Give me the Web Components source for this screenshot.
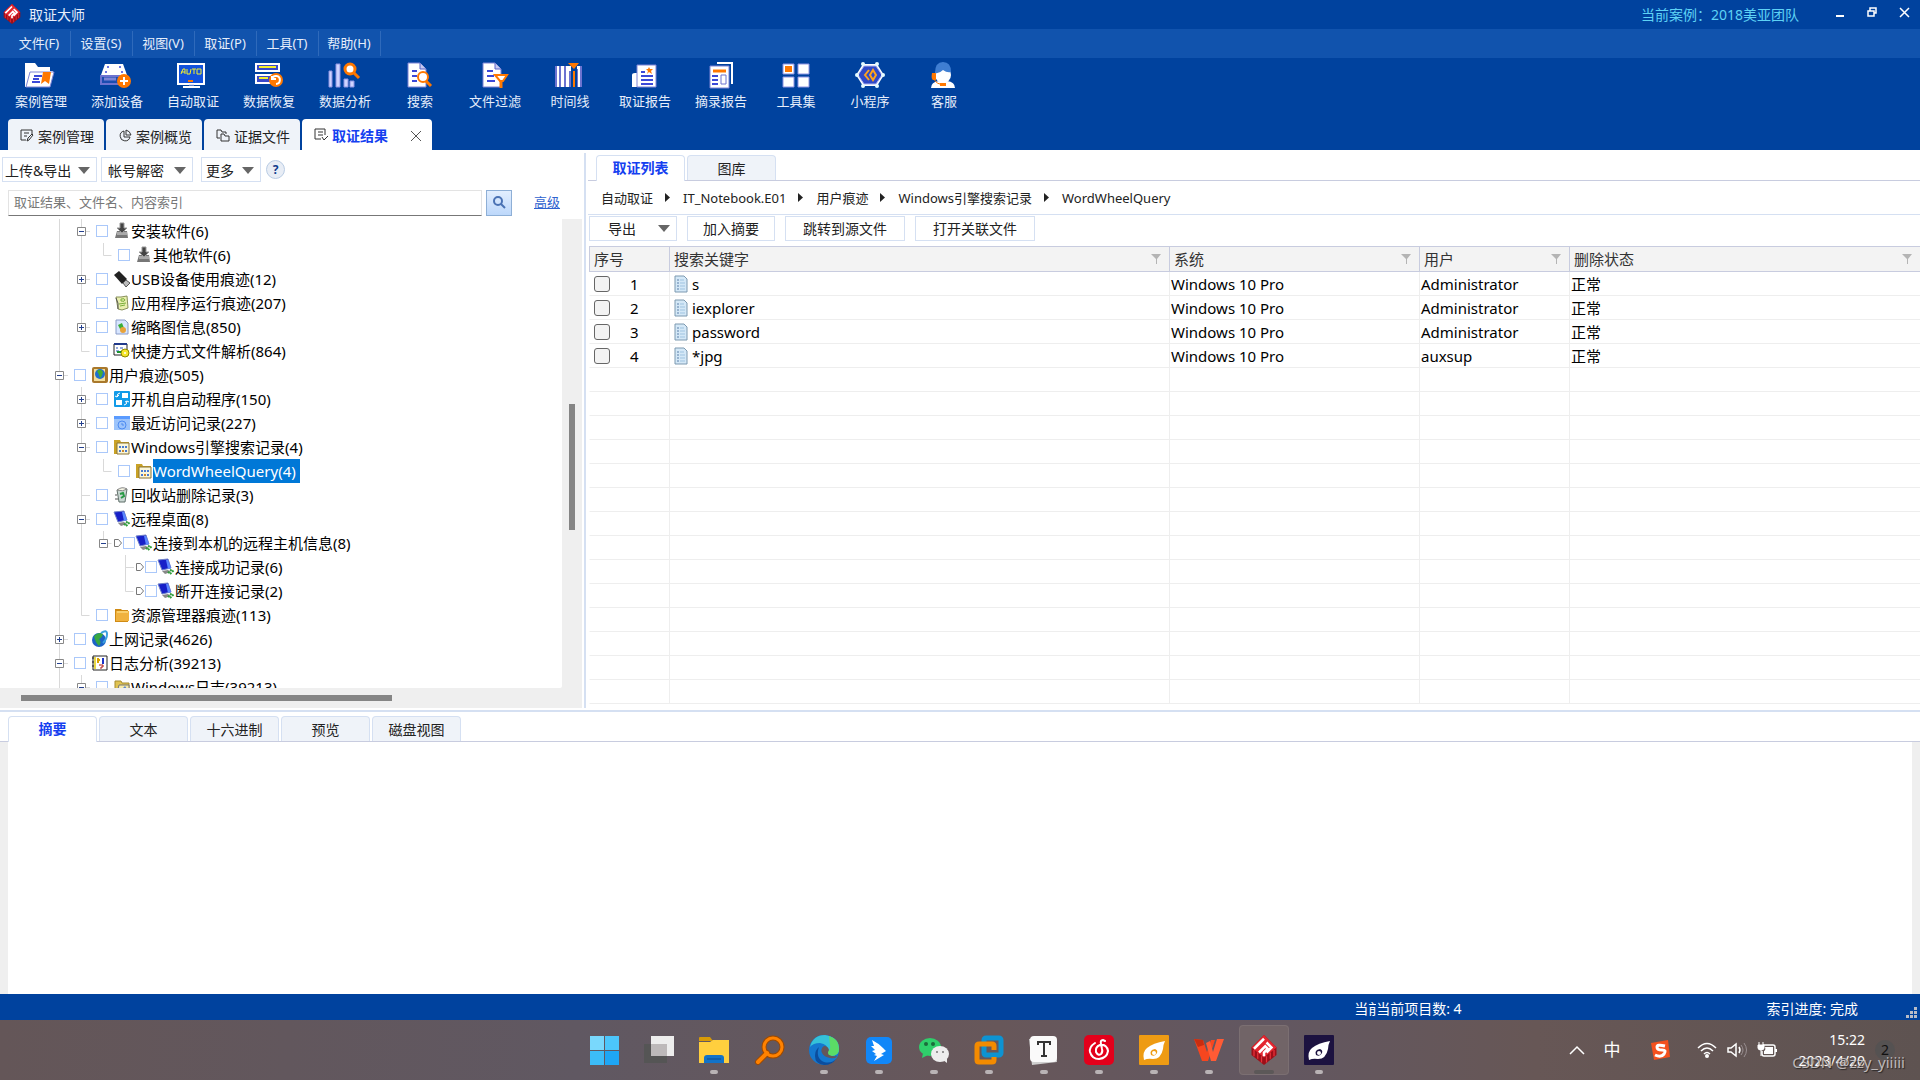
<!DOCTYPE html>
<html lang="zh-CN">
<head>
<meta charset="utf-8">
<title>取证大师</title>
<style>
  html, body {
    margin: 0;
    height: 100%;
    overflow: hidden;
  }

  body {
    --navy: #00429e;
    --line: #d5e0f2;
    --strong-line: #c8ccdf;
    --tab: #eff3f9;
    --accent: #1540f0;
    --gray: #efefef;
    font-family: "Noto Sans", "Noto Sans CJK SC", sans-serif;
    font-size: 14px;
    color: #222;
  }
</style>
</head>
<body>
<app-window></app-window>

<script>
const svg = (w, h, body) =>
  `<svg width="${w}" height="${h}" viewBox="0 0 ${w} ${h}" fill="none" aria-hidden="true">${body}</svg>`;

// Styles every shadow root starts with
const BASE = `
  *, *::before, *::after { box-sizing: border-box; }
  svg { display: block; flex: none; overflow: visible; }
  button { font: inherit; color: inherit; margin: 0; padding: 0; border: 0; background: none; white-space: nowrap; }
  input { font: inherit; margin: 0; }
`;

class BaseElement extends HTMLElement {
  connectedCallback() {
    this.attachShadow({ mode: "open" });
    this.shadowRoot.innerHTML = `<style>${BASE}${this.styles()}</style>${this.markup()}`;
  }
  styles() { return ""; }
  markup() { return "<slot></slot>"; }
}

/* ---------- icons ---------- */

const LOGO = `
  <path d="M12 0 22 10V16L12 24 2 16V10Z" fill="#9c0f18"/>
  <path d="M12 0 22 10 12 18 2 10Z" fill="#e3262f"/>
  <path d="M4 12v5M7 14v5M10 17v5M14 17v5M17 14v5M20 12v5" stroke="#e8323a"/>
  <path d="m4 11 8-8M8 14l5-5 2 2-3 3v3M14 6l4 4-4 4" stroke="#fff" stroke-width="2"/>`;

const PAGE = `<path d="M4 1h12l6 6v18H4z" fill="#fff" stroke="#7d84d6"/><path d="M16 1v6h6" fill="#c7caf0" stroke="#5a62c8"/>`;

const TOOL_ICONS = {
  case: `<path d="M0 25V1h10l3 4h12v4h3l-4 16z" fill="#fff"/><path d="m1 25 4-15h24l-4 15z" fill="#fff" stroke="#7d84d6"/>
    <path d="M9 14h8M8 17h6M7 20h8" stroke="#3b49d8" stroke-width="2"/><path d="M18 10h8l-2 12-4-3-4 3z" fill="#ff7800"/>`,
  device: `<g transform="translate(-2)"><path d="M6 2h18l4 11H2z" fill="#fff"/><circle cx="9" cy="5" r="1" fill="#3b49d8"/><circle cx="21" cy="5" r="1" fill="#3b49d8"/><circle cx="7" cy="10" r="1" fill="#3b49d8"/><circle cx="23" cy="10" r="1" fill="#3b49d8"/>
    <path d="M2 14h26v8H2z" fill="#1b4db0" stroke="#6c73d0" stroke-width="2"/><path d="M5 17h12" stroke="#7d84d6" stroke-width="3"/>
    <circle cx="25" cy="19" r="7" fill="#ff7800"/><path d="M25 15v8M21 19h8" stroke="#fff" stroke-width="2"/></g>`,
  auto: `<g transform="translate(-2)"><rect x="3" y="2" width="26" height="20" fill="#1252dc" stroke="#fff" stroke-width="2"/>
    <path d="m6 12 2-5h2v5m-4-2h4m2-3v5h3l1-5m1 0h4m-2 0v5m3-5h4v5h-4z" stroke="#f4ef2c"/>
    <rect x="13" y="18" width="5" height="2" fill="#ff7800"/><path d="M14 23h5" stroke="#b7bdf0"/><path d="M8 25h17" stroke="#fff" stroke-width="2"/></g>`,
  restore: `<rect x="3" y="2" width="23" height="7" fill="#3a48c8" stroke="#fff" stroke-width="2"/><path d="M6 5h17" stroke="#f4ef2c" stroke-width="2"/>
    <rect x="3" y="13" width="18" height="8" fill="#3a48c8" stroke="#fff" stroke-width="2"/><path d="M6 16h9" stroke="#f4ef2c" stroke-width="2"/>
    <circle cx="23" cy="18" r="7" fill="#ff7800"/><path d="M19 17a4 4 0 1 1 4 5m-4-8v3h4" stroke="#fff" stroke-width="2"/>`,
  chart: `<g transform="translate(-2)"><path d="M2 9h3v16H2zM9 2h4v23H9zM17 17h4v8h-4zM23 19h4v6h-4z" fill="#cfd4ff" stroke="#8d93e2"/>
    <circle cx="23" cy="7" r="5" stroke="#ff7800" stroke-width="3" fill="#fff"/><path d="m27 11 5 5" stroke="#ff7800" stroke-width="3"/></g>`,
  search: `${PAGE}<path d="M8 9h5M8 14h5M8 19h5" stroke="#3b49d8" stroke-width="2"/>
    <circle cx="19" cy="15" r="5" stroke="#ff7800" stroke-width="2" fill="#fff"/><path d="m22 19 5 5" stroke="#ff7800" stroke-width="3"/>`,
  filter: `${PAGE}<path d="M8 9h6M8 14h7M8 19h8" stroke="#3b49d8" stroke-width="2"/>
    <path d="M16 13h12l-4 6h-3z" fill="#fff" stroke="#ff7800" stroke-width="2"/><path d="M22 18v8" stroke="#ff7800" stroke-width="3"/>`,
  timeline: `<g transform="translate(-2)"><path d="M4 4h26v21H4z" fill="#fff"/>
    <path d="M4 4v21M8 4v21M13 4v21M18 9v16M25 7v18M29 4v21" stroke="#6c73d0" stroke-width="2"/><path d="M19 4h6v21h-6z" fill="#00429e"/><path d="M16 1h11l-5 6zM21 9h2v16h-2z" fill="#ff7800"/></g>`,
  report: `<path d="M3 13q0-2 3-2h3v14H3z" fill="#fff"/><path d="M8 3h19v22H8z" fill="#fff" stroke="#7d84d6"/>
    <path d="M12 10h4M12 14h12M12 18h12M12 22h12" stroke="#3b49d8" stroke-width="2"/><path d="m20 5 1 2h3l-2 2 1 3-3-2-2 2 1-3-2-2h2z" fill="#ff7800"/>`,
  extract: `<path d="M12 1h15v21" stroke="#fff" stroke-width="2"/><path d="M5 4h19v22H5z" fill="#fff" stroke="#7d84d6"/>
    <path d="M8 9h13" stroke="#ff7800" stroke-width="3"/><path d="M7 14h6M7 18h6M7 22h6" stroke="#3b49d8" stroke-width="2"/><path d="M16 13h5v9h-5z" stroke="#6c73d0"/>`,
  tools: `<path d="M3 2h11v10H3zM18 2h11v10H18zM3 15h11v10H3zM18 15h11v10H18z" fill="#fff" stroke="#8d93e2"/><path d="M5 4h7v6H5z" fill="#ff7800"/>`,
  mini: `<path d="m9 2 14 0 7 11-7 11H9L2 13z" fill="#fff"/><path d="m10 4 12 0 6 9-6 9H10L4 13z" fill="#2f49c8" stroke="#aab2ee"/>
    <circle cx="9" cy="2" r="2" fill="#e4fbff"/><circle cx="23" cy="2" r="2" fill="#e4fbff"/><circle cx="9" cy="24" r="2" fill="#e4fbff"/><circle cx="23" cy="24" r="2" fill="#e4fbff"/><circle cx="3" cy="13" r="2" fill="#e4fbff"/><circle cx="29" cy="13" r="2" fill="#e4fbff"/>
    <path d="m15 8-4 5 4 5M19 8l-3 5 3 5 3-5z" stroke="#ffa21a" stroke-width="2"/>`,
  service: `<path d="M3 26q0-6 8-7h8q8 1 8 7z" fill="#fff"/><circle cx="15" cy="13" r="8" fill="#fff"/><path d="M7 11q0-11 8-11t8 10q-4 1-8-2-4 4-8 3z" fill="#3f7ed2"/>
    <path d="M4 11h4v7H5q-2-1-1-7z" fill="#ff7800"/><path d="M6 17q3 6 9 5" stroke="#ff7800"/><path d="M12 21h6v3h-6z" fill="#ff7800"/>`
};

const TREE_ICONS = {
  install: `<path d="M3 8h10l1 7H1z" fill="#777"/><path d="M3 9h10v3H3z" fill="#aaa"/><path d="M6 0h4v5h3l-5 5-5-5h3z" fill="#444" stroke="#999"/>`,
  usb: `<path d="m0 4 5-4 8 8-5 5z" fill="#222"/><path d="m9 12 3-3 4 3-4 4z" fill="#bbb" stroke="#555"/>`,
  program: `<path d="m2 2 5 0 6-1 1 12-6 2-4-1z" fill="#e9efae" stroke="#88905a"/><path d="M7 4q4-1 4 1T7 6zm-2 5 7-1m-6 3 5-1" stroke="#7aae3a"/><path d="M2 3q3 5 2 11" stroke="#555"/>`,
  thumb: `<path d="M2 1h9l3 3v11H2z" fill="#d8e6ff" stroke="#8a9cc8"/><path d="m4 6 4-2 2 5-4 1z" fill="#3cae3a"/><circle cx="9" cy="11" r="3" fill="#e8a33a"/>`,
  shortcut: `<path d="M0 1h13v11H0z" fill="#fff" stroke="#222"/><path d="M0 1h13" stroke="#223a8c" stroke-width="2"/><path d="M2 5h2m-2 3h3m1-3h3" stroke="#2a55b8"/><circle cx="11" cy="10" r="4" fill="#f5e62c" stroke="#8f8600"/><circle cx="11" cy="10" r="1" fill="#fff"/><path d="M3 9h4" stroke="#17942c" stroke-width="2"/>`,
  user: `<rect x="0" y="0" width="16" height="16" rx="2" fill="#a9782b"/><rect x="2" y="2" width="11" height="12" fill="#f3dd9a"/><circle cx="8" cy="7" r="5" fill="#1f6fd0"/><path d="M5 4q4-3 6 1-1 5-3 6-1-4-3-7z" fill="#42ad35"/>`,
  startup: `<rect width="16" height="16" rx="1" fill="#129be8"/><path d="M8 2h6v5H8zM2 9h6v5H2z" fill="#fff"/><path d="M6 2q-3 0-3 4m0 0L1 5m2 1 2-2M10 14q3 0 3-4m0 0-2 1m2-1 2 1" stroke="#fff"/>`,
  recent: `<path d="M0 1h16v14H0z" fill="#9cc4fb"/><path d="M0 1h16v3H0z" fill="#5a9bff"/><circle cx="8" cy="10" r="4" stroke="#4c8bf2"/><path d="M8 8v2h2" stroke="#4c8bf2"/>`,
  engine: `<path d="M0 1h6l1 2h8v12H0z" fill="#c9a227"/><path d="M3 4h12v11H3z" fill="#faf6da" stroke="#8a7434"/><path d="M5 8h2m1 0h2m1 0h2M5 12h2m4 0h2" stroke="#4a7bd0" stroke-width="2"/><path d="M8 12h2" stroke="#d08a2a" stroke-width="2"/>`,
  recycle: `<path d="m3 3 10-1-2 13H5z" fill="#c9d6d2" stroke="#5f6f69"/><path d="M3 3q5-4 10-1-4 3-10 1z" fill="#f8f8e8" stroke="#888"/><path d="m6 7 3-1 1 3-3 2" stroke="#2a9a46" stroke-width="2"/><path d="M1 8h2m-2 4h3" stroke="#555"/>`,
  remote: `<path d="m0 1 10-1 3 9-9 2z" fill="#1720c8" stroke="#6f80c8"/><path d="m8 1 2 0 3 8-3 1z" fill="#5a86ff"/><path d="m4 12 6-1 3 2-6 2z" fill="#888"/><path d="m10 14 4-4m-2 5 4-4" stroke="#2f9d3a" stroke-width="2" stroke-dasharray="2 1"/>`,
  folder: `<path d="M1 2h6l1 1h6v12H1z" fill="#d08b14"/><path d="M2 4h13v10H2z" fill="#f0b23e"/><path d="M3 4h11v2H3z" fill="#f9cf6c"/>`,
  globe: `<circle cx="7" cy="9" r="7" fill="#1b63c6"/><path d="M2 5q5-5 9-2-1 4-4 5 3 3 0 7-4-4-5-10z" fill="#38a842"/><path d="M9 2q6-4 6 1t-4 9" stroke="#3aa0e0" stroke-width="2"/>`,
  log: `<path d="M1 1h14v14H1z" fill="#fff" stroke="#222"/><path d="M3 2v12" stroke="#e8d84a" stroke-width="2"/><path d="M6 3v5m-1-3h3" stroke="#d9a300" stroke-width="2"/><path d="M11 3v6" stroke="#1b32c8" stroke-width="2"/><path d="M7 10h4v2H9v2" stroke="#b01818"/><path d="M0 3h2M0 7h2M0 11h2" stroke="#222"/>`,
  winlog: `<path d="M1 2h6l1 2h7v11H1z" fill="#e0c352" stroke="#a58b2c"/><path d="M5 6h10v8H3z" fill="#f5eaa8" stroke="#777"/><path d="m8 10 3-3 2 3z" fill="#5a86d0"/>`
};

const TAB_ICONS = {
  edit: `<path d="M12 5V1H1v10h5M4 4h5M4 7h3M7 12l1-3 4-4 1 1-4 5z" stroke="#333"/>`,
  pie: `<path d="M6 2a5 5 0 1 0 6 6H6zM8 1q4 1 5 5H8z" stroke="#333"/>`,
  copy: `<path d="M4 9H1V1h4l1 2h4v2M5 5h3l1 2h4v5H5z" stroke="#333"/>`,
  check: `<path d="M11 7V1H1v10h6M4 4h5M4 7h5M8 9l2 3 4-4" stroke="#333"/>`
};

const APP_ICONS = {
  start: `<path d="M1 1h14v14H1z" fill="#79d8fc"/><path d="M16 1h14v14H16z" fill="#4cc6fb"/><path d="M1 16h14v14H1z" fill="#3cbcf8"/><path d="M16 16h14v14H16z" fill="#1ea6f5"/>`,
  taskview: `<path d="M0 9h23v19H0z" fill="#555"/><path d="M7 1h23v20H7z" fill="#ededed"/><path d="M7 9h16v12H7z" fill="#bdb9ba"/>`,
  files: `<path d="M0 3q0-1 1-1h10l3 4H0z" fill="#d79a06"/><path d="M0 7h11l3-2h16v23H0z" fill="#ffcf3e"/><path d="M5 28v-5q0-3 3-3h14q3 0 3 3v5z" fill="#1273c8"/><path d="M8 24h14" stroke="#0b4d8f"/>`,
  everything: `<circle cx="19" cy="12" r="9" stroke="#9e4a00" stroke-width="5"/><path d="M13 18 4 27" stroke="#9e4a00" stroke-width="6" stroke-linecap="round"/><circle cx="19" cy="12" r="9" stroke="#ff8200" stroke-width="3"/><path d="M13 18 4 27" stroke="#ff8200" stroke-width="4" stroke-linecap="round"/>`,
  edge: `<circle cx="15" cy="15" r="15" fill="#1478cf"/><path d="M1 12Q4 0 16 0q14 2 14 14 0 7-8 7-5-1-3-5 0-7-8-8-7 0-10 4z" fill="#35c1d8"/><path d="M20 1q10 3 10 13 0 7-8 7-5-1-3-5 3-1 2-6z" fill="#5bdc66"/><path d="M10 12q-4 11 5 15 7 2 12-3-4 6-12 6-9-1-9-9 0-6 4-9z" fill="#0c4d9d"/><path d="M15 11q-4 3-2 7t8 5q6 1 7-2-4 1-8-1-2-2 0-5-1-4-5-4z" fill="#65565a"/>`,
  dingtalk: `<rect x="2" y="2" width="26" height="27" rx="5" fill="#1187f8"/><path d="M8 5q6 3 11 8l3 3-5 3 3 1-10 6 3-5-3-1 2-1-4-3 3-1-4-4 3 0z" fill="#fff"/>`,
  wechat: `<ellipse cx="11" cy="12" rx="11" ry="9" fill="#2fcf6b"/><path d="m4 18-1 5 6-3z" fill="#2fcf6b"/><circle cx="7" cy="9" r="2" fill="#1b6c3c"/><circle cx="14" cy="9" r="2" fill="#1b6c3c"/><ellipse cx="21" cy="19" rx="9" ry="8" fill="#ededed"/><path d="m24 25 4 3v-5z" fill="#ededed"/><circle cx="18" cy="17" r="1" fill="#777"/><circle cx="24" cy="17" r="1" fill="#777"/>`,
  vmware: `<rect x="10" y="3" width="17" height="17" rx="2" stroke="#0d93d2" stroke-width="5"/><path d="M20 22v3q0 2-2 2H5q-2 0-2-2V11q0-2 2-2h13q2 0 2 2v4" stroke="#f38b00" stroke-width="5"/><path d="M10 12v6q0 2 2 2h5" stroke="#0d93d2" stroke-width="4"/>`,
  typora: `<path d="M0 4 24 1l4 26-25 3z" fill="#cfcfcf"/><rect x="1" y="1" width="27" height="26" rx="4" fill="#fafafa"/><path d="M9 10V7h12v3M15 7v14M12 21h6" stroke="#333" stroke-width="2"/>`,
  netease: `<rect width="30" height="30" rx="5" fill="#e3001b"/><path d="M11 8q-6 4-5 9 2 7 9 7 8-1 9-8-1-7-8-6-5 2-4 7 2 4 5 2 2-2 1-5L17 9q-1-4 2-4l2 1" stroke="#fff" stroke-width="2" stroke-linecap="round"/>`,
  feather: `<path d="M5 25q-2-8 3-12 6-5 18-7-2 4-2 8-2 10-10 10-5-1-9 1zM12 20q4 2 6-2 1-3-2-4-6 1-4 6z" fill="#fff" fill-rule="evenodd"/><circle cx="15" cy="18" r="2" fill="#fff"/>`,
  wps: `<path d="m0 4 9 1 4 12 4-12h4l-7 21H8z" fill="#f6461f"/><path d="m12 8 4-2 3 11 4-13h7l-8 22h-5z" fill="#ff5b35"/><path d="m0 4 9 1 1 5-6 2z" fill="#c92d0f"/>`
};

const appIcon = (name) => {
  if (name === "forensic") return `<svg width="30" height="30" viewBox="0 0 24 24" fill="none" aria-hidden="true">${LOGO}</svg>`;
  if (name === "orange") return svg(30, 30, `<rect width="30" height="30" rx="1" fill="#ee9b13"/>${APP_ICONS.feather}`);
  if (name === "purple") return svg(30, 30, `<rect width="30" height="30" rx="1" fill="#1c1240"/>${APP_ICONS.feather}`);
  return svg(30, 30, APP_ICONS[name]);
};

const CARET = svg(12, 8, `<path d="M0 1h12L6 8z" fill="#666"/>`);

/* ---------- header ---------- */

class TitleBar extends BaseElement {
  styles() {
    return `
      :host { display: flex; align-items: center; height: 29px; padding: 0 6px 2px 3px; box-sizing: border-box; background: var(--navy); color: #e6eefb; }
      .name { margin-left: 8px; flex: 1; }
      .case { color: #5ed2f5; margin-right: 31px; }
      .controls { display: flex; gap: 12px; margin-bottom: 4px; }
      .controls button { width: 20px; height: 20px; display: grid; place-items: center; }
    `;
  }
  markup() {
    return `
      <svg width="18" height="20" viewBox="2 0 20 24" fill="none" aria-hidden="true">${LOGO}</svg>
      <span class="name">取证大师</span>
      <span class="case">当前案例：2018美亚团队</span>
      <div class="controls">
        <button aria-label="最小化">${svg(10, 12, `<path d="M1 10h8" stroke="#fff" stroke-width="2"/>`)}</button>
        <button aria-label="还原">${svg(10, 12, `<path d="M3 5V2h6v5H7M1 5h6v5H1z" stroke="#fff" stroke-width="1.500"/>`)}</button>
        <button aria-label="关闭">${svg(12, 12, `<path d="m2 2 9 9M11 2l-9 9" stroke="#fff" stroke-width="1.500"/>`)}</button>
      </div>`;
  }
}

class MenuBar extends BaseElement {
  styles() {
    return `
      :host { display: flex; align-items: center; height: 29px; padding-left: 9px; background: #1153ad; color: #e6eefb; font-size: 13px; }
      button { width: 62px; height: 25px; padding: 0 1px 2px 0; border-right: 1px solid #2f6abb; }
    `;
  }
  markup() {
    return ["文件(F)", "设置(S)", "视图(V)", "取证(P)", "工具(T)", "帮助(H)"].map((t) => `<button>${t}</button>`).join("");
  }
}

class ToolItem extends BaseElement {
  styles() {
    return `
      :host { display: block; width: 74px; color: #e6eefb; font-size: 13px; }
      :host([wide]) { width: 76px; }
      button { width: 100%; display: flex; flex-direction: column; align-items: center; gap: 1px; }
      span { line-height: 20px; }
    `;
  }
  markup() {
    return `<button>${svg(32, 28, TOOL_ICONS[this.getAttribute("icon")])}<span><slot></slot></span></button>`;
  }
}

class ToolBar extends BaseElement {
  styles() {
    return `:host { display: flex; box-sizing: border-box; height: 61px; padding: 4px 3px 0; background: var(--navy); }`;
  }
  markup() {
    const tools = [["case", "案例管理"], ["device", "添加设备"], ["auto", "自动取证"], ["restore", "数据恢复"], ["chart", "数据分析"],
      ["search", "搜索"], ["filter", "文件过滤"], ["timeline", "时间线"], ["report", "取证报告"], ["extract", "摘录报告"],
      ["tools", "工具集"], ["mini", "小程序"], ["service", "客服"]];
    return tools.map(([icon, label]) => `<tool-item icon="${icon}" ${label.length === 4 ? "wide" : ""}>${label}</tool-item>`).join("");
  }
}

class MainTabs extends BaseElement {
  styles() {
    return `
      :host { display: flex; gap: 2px; height: 31px; padding-left: 8px; background: var(--navy); }
      .tab { display: flex; align-items: center; width: 96px; padding: 2px 0 0 12px; background: var(--tab); border-radius: 4px 4px 0 0; }
      .active { width: 130px; padding: 0 10px 0 12px; background: #fff; color: var(--accent); font-weight: 700; }
      .close { margin-left: auto; }
      .tab > button:first-child { display: flex; align-items: center; gap: 4px; }
    `;
  }
  markup() {
    const tab = (icon, label) => `<div class="tab"><button>${svg(14, 14, TAB_ICONS[icon])}${label}</button></div>`;
    return `
      ${tab("edit", "案例管理")}${tab("pie", "案例概览")}${tab("copy", "证据文件")}
      <div class="tab active">
        <button>${svg(14, 14, TAB_ICONS.check)}取证结果</button>
        <button class="close" aria-label="关闭标签">${svg(12, 12, `<path d="m1 2 10 10M11 2 1 12" stroke="#555"/>`)}</button>
      </div>`;
  }
}

/* ---------- evidence tree ---------- */

class TreeRow extends BaseElement {
  styles() {
    return `
      :host { display: flex; align-items: center; height: 24px; padding-left: 48px; font-size: 15px; color: #000; white-space: nowrap; }
      input { appearance: none; width: 12px; height: 12px; margin: 0 6px 0 4px; border: 1px solid #aac8fa; background: #fff; flex: none; }
      .mark { margin-right: 1px; }
      .mark + input { margin: 0 1px 0 0; }
      label { display: flex; align-items: center; gap: 1px; }
      span { line-height: 24px; }
      :host([selected]) span { background: #0078d7; color: #fff; padding-right: 4px; }
    `;
  }
  // One character per level: "|" passes through, " " is empty, "t" and "l" are
  // a tee and a corner, "+" and "-" are boxes on a tee, "=" is a box on a corner
  cell(c) {
    const line = `stroke="#d9d9d9"`;
    let out = "";
    if (c === "|") out = `<path d="M11.500 0v24" ${line}/>`;
    if (c === "t" || c === "+" || c === "-") out = `<path d="M11.500 0v24M12 12.500h8" ${line}/>`;
    if (c === "l" || c === "=") out = `<path d="M11.500 0v12.500h8" ${line}/>`;
    if ("+-=".includes(c)) {
      out += `<path d="M7.500 8.500h8v8h-8z" fill="#fff" stroke="#888"/><path d="M9 12.500h5${c === "+" ? "M11.500 10v5" : ""}" stroke="#24408e"/>`;
    }
    return svg(22, 24, out);
  }
  markup() {
    const mark = this.hasAttribute("marked")
      ? `<svg class="mark" width="8" height="8" viewBox="0 0 8 8" fill="none"><path d="M.500.500h4l3 3.500-3 3.500h-4z" stroke="#777"/></svg>` : "";
    return `${[...this.getAttribute("guides")].map((c) => this.cell(c)).join("")}${mark}<input type="checkbox" id="pick">
      <label for="pick">${svg(16, 16, TREE_ICONS[this.getAttribute("icon")])}<span><slot></slot></span></label>`;
  }
}

const TREE = [
  ["|-", "install", "安装软件(6)"],
  ["||l", "install", "其他软件(6)"],
  ["|+", "usb", "USB设备使用痕迹(12)"],
  ["|t", "program", "应用程序运行痕迹(207)"],
  ["|+", "thumb", "缩略图信息(850)"],
  ["|l", "shortcut", "快捷方式文件解析(864)"],
  ["-", "user", "用户痕迹(505)"],
  ["|+", "startup", "开机自启动程序(150)"],
  ["|+", "recent", "最近访问记录(227)"],
  ["|-", "engine", "Windows引擎搜索记录(4)"],
  ["||l", "engine", "WordWheelQuery(4)", "selected"],
  ["|t", "recycle", "回收站删除记录(3)"],
  ["|-", "remote", "远程桌面(8)"],
  ["||=", "remote", "连接到本机的远程主机信息(8)", "marked"],
  ["|| t", "remote", "连接成功记录(6)", "marked"],
  ["|| l", "remote", "断开连接记录(2)", "marked"],
  ["|l", "folder", "资源管理器痕迹(113)"],
  ["+", "globe", "上网记录(4626)"],
  ["-", "log", "日志分析(39213)"],
  ["|-", "winlog", "Windows日志(39213)"]
];

class EvidencePanel extends BaseElement {
  styles() {
    return `
      :host { display: flex; flex-direction: column; width: 584px; min-height: 0; background: #fff; }
      .actions { display: flex; align-items: center; padding: 7px 2px 0; height: 32px; }
      .actions button { display: flex; align-items: center; justify-content: space-between; height: 25px; border: 1px solid var(--line); }
      .upload { width: 95px; margin-right: 4px; padding: 0 6px 0 2px; }
      .account { width: 92px; margin-right: 8px; padding: 0 6px; }
      .more { width: 60px; margin-right: 5px; padding: 0 6px 0 4px; }
      .actions .help { width: 19px; height: 19px; justify-content: center; border-radius: 50%; border-color: #b9cce4; background: #e8edf5; font-size: 12px; font-weight: 700; color: #0f3c8c; }
      .search { display: flex; align-items: center; height: 37px; padding: 4px 0 0 8px; }
      .search input { width: 474px; height: 26px; padding: 0 5px 2px; border: 1px solid #e3e3e3; border-bottom-color: #777; outline: 0; font-size: 13px; }
      .search input::placeholder { color: #777; }
      .search button { width: 26px; height: 26px; margin: 0 22px 0 4px; display: grid; place-items: center; border: 1px solid #8eafd6; background: linear-gradient(#e2eefe, #bdd8fb); }
      a { font-size: 13px; color: #2f63cf; padding-bottom: 2px; }
      .body { flex: 1; min-height: 0; display: grid; grid-template: minmax(0, 1fr) 20px / minmax(0, 1fr) 20px; margin-right: 2px; background: var(--gray); }
      .tree { overflow: hidden; background: #fff; border-radius: 0 0 2px 0; }
      .vbar { display: grid; grid-template-rows: 185fr 125fr 158fr; justify-content: center; }
      .vbar i { grid-row: 2; width: 6px; background: #858585; }
      .hbar { display: grid; grid-template-columns: 21fr 371fr 170fr; align-items: center; }
      .hbar i { grid-column: 2; height: 6px; background: #858585; }
    `;
  }
  markup() {
    return `
      <div class="actions">
        <button class="upload" aria-haspopup="menu">上传&amp;导出${CARET}</button>
        <button class="account" aria-haspopup="menu">帐号解密${CARET}</button>
        <button class="more" aria-haspopup="menu">更多${CARET}</button>
        <button class="help">?</button>
      </div>
      <div class="search">
        <input type="text" aria-label="搜索" placeholder="取证结果、文件名、内容索引">
        <button aria-label="查找">${svg(14, 14, `<circle cx="6" cy="5" r="4" stroke="#4a72b4" stroke-width="2"/><path d="m9 8 4 4" stroke="#4a72b4" stroke-width="2"/>`)}</button>
        <a href="#">高级</a>
      </div>
      <div class="body">
        <div class="tree">
          ${TREE.map(([g, icon, text, flag]) => `<tree-row guides="${g}" icon="${icon}" ${flag || ""}>${text}</tree-row>`).join("")}
        </div>
        <div class="vbar"><i></i></div>
        <div class="hbar"><i></i></div>
      </div>`;
  }
}

/* ---------- tabs shared by both panes ---------- */

class PaneTabs extends BaseElement {
  styles() {
    return `
      :host { display: flex; box-sizing: border-box; gap: 2px; height: 26px; padding-left: 8px; border-bottom: 1px solid var(--strong-line); }
      button { width: 89px; height: 25px; border: 1px solid var(--line); border-bottom: 0; border-radius: 4px 4px 0 0; background: var(--tab); }
      .active { height: 26px; padding-bottom: 3px; background: #fff; color: var(--accent); font-weight: 700; }
    `;
  }
  markup() {
    return this.getAttribute("tabs").split(",").map((t, i) => `<button class="${i ? "" : "active"}">${t}</button>`).join("");
  }
}

/* ---------- result list ---------- */

class BreadCrumb extends BaseElement {
  styles() {
    return `
      :host { display: flex; box-sizing: border-box; align-items: center; gap: 12px; height: 34px; padding-left: 13px; font-size: 13px; border-bottom: 1px solid var(--line); }
    `;
  }
  markup() {
    return this.getAttribute("path").split("/").map((t) => `<span>${t}</span>`)
      .join(svg(6, 9, `<path d="M0 0v9l5-4.500z" fill="#222"/>`));
  }
}

class ResultTable extends BaseElement {
  styles() {
    return `
      :host { display: block; flex: 1; min-height: 0; overflow: hidden; font-size: 15px; color: #000; }
      table { width: 100%; table-layout: fixed; border-collapse: separate; border-spacing: 0; }
      th, td { height: 24px; padding: 0 0 0 1px; text-align: left; font-weight: 400; line-height: 20px; border: 0 solid #eee; border-width: 0 0 1px 1px; white-space: nowrap; }
      td:first-child { border-left-color: #fff; }
      th { height: 26px; padding: 0 8px 0 4px; background: #f3f3f3; color: #333; border-color: var(--strong-line); border-top-width: 1px; }
      th > div, td > div, td label { display: flex; align-items: center; }
      th > div { justify-content: space-between; }
      td:first-child { padding-left: 4px; }
      td:nth-child(2) { padding-left: 4px; }
      td:nth-child(2) > div { gap: 3px; }
      td label { gap: 20px; }
      input { appearance: none; width: 16px; height: 16px; border: 1px solid #666; border-radius: 3px; background: #f3f3f3; }
      .no { width: 80px; } .key { width: 500px; } .sys { width: 250px; } .usr { width: 150px; }
    `;
  }
  markup() {
    const funnel = svg(10, 10, `<path d="M0 0h10L6 5v5H5V5z" fill="#b4b4b4"/>`);
    const doc = svg(15, 16, `<path d="M1 0h9l3 3v13H1z" fill="#d4e8f7" stroke="#7d99b0"/><path d="M3 4h2M3 7h2M3 10h2M3 13h2" stroke="#5a7fa8"/><path d="M6 4h4M6 7h5M6 10h5M6 13h5" stroke="#9fc3e0"/>`);
    const rows = [["s", "Administrator"], ["iexplorer", "Administrator"], ["password", "Administrator"], ["*jpg", "auxsup"]];
    const empty = "<tr><td></td><td></td><td></td><td></td><td></td></tr>";
    return `
      <table>
        <colgroup><col class="no"><col class="key"><col class="sys"><col class="usr"><col></colgroup>
        <thead><tr>
          <th>序号</th>
          ${["搜索关键字", "系统", "用户", "删除状态"].map((t) => `<th><div>${t}${funnel}</div></th>`).join("")}
        </tr></thead>
        <tbody>
          ${rows.map(([key, user], i) => `<tr>
            <td><label><input type="checkbox">${i + 1}</label></td>
            <td><div>${doc}${key}</div></td><td>Windows 10 Pro</td><td>${user}</td><td>正常</td>
          </tr>`).join("")}
          ${empty.repeat(14)}
        </tbody>
      </table>`;
  }
}

class ResultPanel extends BaseElement {
  styles() {
    return `
      :host { display: flex; flex-direction: column; flex: 1; min-width: 0; min-height: 0; margin-top: 3px; padding: 2px 0 0 2px; border-left: 2px solid var(--line); background: #fff; }
      .actions { display: flex; gap: 10px; padding: 1px 0 5px 1px; }
      .actions button { height: 25px; padding-bottom: 1px; border: 1px solid var(--line); }
      .short { width: 88px; }
      .long { width: 120px; }
      .actions .export { display: flex; align-items: center; justify-content: space-between; padding: 0 6px 1px 18px; }
      result-table { margin-left: 1px; }
    `;
  }
  markup() {
    return `
      <pane-tabs tabs="取证列表,图库"></pane-tabs>
      <bread-crumb path="自动取证/IT_Notebook.E01/用户痕迹/Windows引擎搜索记录/WordWheelQuery"></bread-crumb>
      <div class="actions">
        <button class="short export" aria-haspopup="menu">导出${CARET}</button>
        <button class="short">加入摘要</button>
        <button class="long">跳转到源文件</button>
        <button class="long">打开关联文件</button>
      </div>
      <result-table></result-table>`;
  }
}

class DetailPanel extends BaseElement {
  styles() {
    return `
      :host { display: flex; flex-direction: column; min-height: 0; padding-top: 4px; background: #fff; }
      .page { flex: 1; border: 0 solid var(--gray); border-width: 0 8px; }
    `;
  }
  markup() {
    return `<pane-tabs tabs="摘要,文本,十六进制,预览,磁盘视图"></pane-tabs><div class="page"></div>`;
  }
}

/* ---------- footer ---------- */

class StatusBar extends BaseElement {
  styles() {
    return `
      :host { display: flex; align-items: center; height: 26px; padding-right: 3px; background: var(--navy); color: #fff; }
      .count { display: flex; margin-left: auto; margin-right: 305px; }
      .under { width: 22px; overflow: hidden; white-space: nowrap; }
      .count, .progress { padding-top: 4px; line-height: 22px; }
      .progress { margin-right: 48px; }
      svg { align-self: flex-end; margin-bottom: 2px; }
    `;
  }
  markup() {
    return `
      <div class="count"><span class="under">当前</span><span>当前项目数: 4</span></div>
      <span class="progress">索引进度: 完成</span>
      ${svg(11, 11, `<path d="M8 0h3v3H8zM4 4h3v3H4zM8 4h3v3H8zM0 8h3v3H0zM4 8h3v3H4zM8 8h3v3H8z" fill="#b8bcc8"/>`)}`;
  }
}

class TaskBar extends BaseElement {
  styles() {
    return `
      :host { display: grid; grid-template-columns: 1fr auto 1fr; align-items: center; height: 60px; position: relative; color: #fff;
        background: linear-gradient(90deg, #645658, #605862 30%, #67575a 52%, #625761 66%, #675756 80%, #5e5351); }
      .apps { grid-column: 2; display: flex; gap: 5px; padding-left: 2px; }
      .apps button { width: 50px; height: 50px; display: grid; grid-template-rows: 40px 4px; justify-items: center; align-items: center; padding-top: 5px; border-radius: 4px; }
      .apps button.run::after { content: ""; width: 8px; height: 4px; border-radius: 2px; background: #b9b3b5; }
      .apps button.active { background: #716467; outline: 1px solid #7b6f72; outline-offset: -1px; }
      .apps button.active::after { width: 20px; background: #5c5858; }
      .tray { display: flex; align-items: center; justify-content: flex-end; padding-right: 25px; }
      .ime { width: 20px; margin: 0 28px 0 17px; font-size: 17px; line-height: 24px; }
      .sogou { margin-right: 27px; }
      .net { display: flex; gap: 10px; }
      .clock { width: 88px; text-align: right; line-height: 21px; }
      .badge { width: 20px; height: 20px; margin-left: 10px; border-radius: 50%; background: #555252; color: #111; text-align: center; line-height: 20px; }
      .watermark { position: absolute; right: 15px; bottom: 6px; font-size: 15px; line-height: 24px; color: #cfcaca; opacity: .85; text-shadow: 1px 1px 1px #222; }
    `;
  }
  markup() {
    const apps = [["start", "开始"], ["taskview", "任务视图"], ["files", "文件资源管理器"], ["everything", "Everything"], ["edge", "Edge"], ["dingtalk", "钉钉"], ["wechat", "微信"],
      ["vmware", "VMware"], ["typora", "Typora"], ["netease", "网易云音乐"], ["orange", "取证工具"], ["wps", "WPS"], ["forensic", "取证大师"], ["purple", "分析工具"]];
    const idle = ["start", "taskview", "everything"];
    const cls = (n) => (idle.includes(n) ? "" : n === "forensic" ? "run active" : "run");
    return `
      <div class="apps">${apps.map(([n, label]) => `<button class="${cls(n)}" aria-label="${label}">${appIcon(n)}</button>`).join("")}</div>
      <div class="tray">
        <button class="up" aria-label="显示隐藏的图标">${svg(16, 10, `<path d="m1 9 7-7 7 7" stroke="#fff" stroke-width="1.500"/>`)}</button>
        <button class="ime">中</button>
        <button class="sogou" aria-label="搜狗输入法">${svg(20, 20, `<path d="m1 3 17-3 2 17-16 3z" fill="#f4511e"/><path d="M15 6q-8-2-8 1t5 3 2 4-9 1" stroke="#fff" stroke-width="3"/>`)}</button>
        <button class="net" aria-label="网络、声音和电池">
          ${svg(20, 16, `<path d="M1 6q9-9 18 0M4 9q6-6 12 0M7 12q3-3 6 0" stroke="#fff" stroke-width="1.500"/><circle cx="10" cy="14" r="2" fill="#fff"/>`)}
          ${svg(20, 16, `<path d="M1 6h3l5-4v12l-5-4H1z" stroke="#fff" stroke-width="1.500"/><path d="M12 5q2 3 0 6" stroke="#fff" stroke-width="1.500"/><path d="M14 3q4 5 0 10M17 1q5 7 0 14" stroke="#9a9092"/>`)}
          ${svg(20, 16, `<path d="M6 3h10q2 0 2 2v7q0 2-2 2H7q-2 0-2-2V9" stroke="#fff" stroke-width="1.500"/><path d="M8 5h8v7H7V9q2-1 1-4zM18 7h2v3h-2z" fill="#fff"/><path d="M1 3h6v3q0 2-3 2T1 6zM2 0v3M6 0v3M4 8v6" stroke="#fff" fill="#fff"/>`)}
        </button>
        <time class="clock">15:22<br>2023/4/20</time>
        <span class="badge">2</span>
      </div>
      <span class="watermark">CSDN @zzy_yiiiii</span>`;
  }
}

class AppWindow extends BaseElement {
  styles() {
    return `
      :host { display: flex; flex-direction: column; height: 100vh; }
      main { flex: 1; min-height: 0; display: flex; flex-direction: column; background: #fff; }
      .upper { flex: 279 1 0; min-height: 0; display: flex; padding-bottom: 2px; border-bottom: 2px solid var(--line); }
      detail-panel { flex: 139 1 0; }
    `;
  }
  markup() {
    return `
      <title-bar></title-bar>
      <menu-bar></menu-bar>
      <tool-bar></tool-bar>
      <main-tabs></main-tabs>
      <main>
        <div class="upper">
          <evidence-panel></evidence-panel>
          <result-panel></result-panel>
        </div>
        <detail-panel></detail-panel>
      </main>
      <status-bar></status-bar>
      <task-bar></task-bar>`;
  }
}

customElements.define("title-bar", TitleBar);
customElements.define("menu-bar", MenuBar);
customElements.define("tool-item", ToolItem);
customElements.define("tool-bar", ToolBar);
customElements.define("main-tabs", MainTabs);
customElements.define("tree-row", TreeRow);
customElements.define("evidence-panel", EvidencePanel);
customElements.define("pane-tabs", PaneTabs);
customElements.define("bread-crumb", BreadCrumb);
customElements.define("result-table", ResultTable);
customElements.define("result-panel", ResultPanel);
customElements.define("detail-panel", DetailPanel);
customElements.define("status-bar", StatusBar);
customElements.define("task-bar", TaskBar);
customElements.define("app-window", AppWindow);
</script>
</body>
</html>
